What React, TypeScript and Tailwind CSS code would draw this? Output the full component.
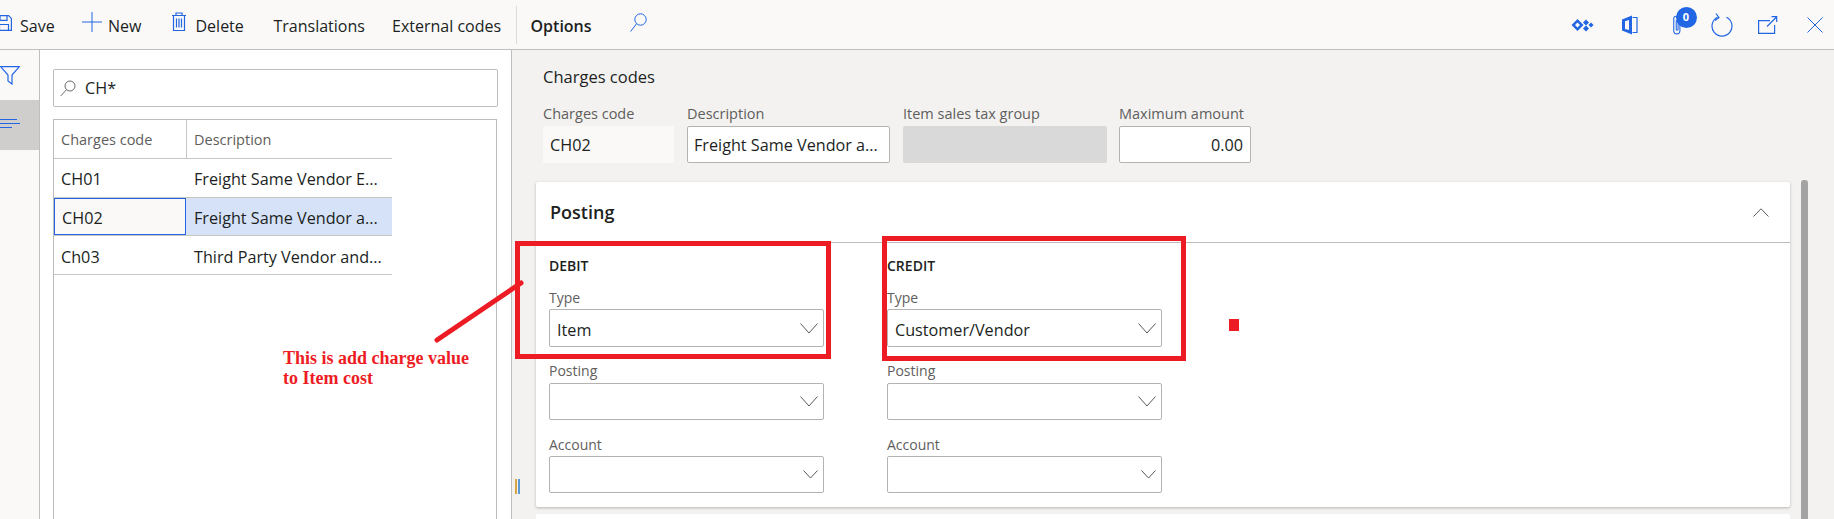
const BLUE = "#2266e3";

function Chevron({ small = false }: { small?: boolean }) {
  return small ? (
    <svg width="15" height="9" viewBox="0 0 15 9" fill="none" stroke="#5a5856" strokeWidth="1"><path d="M.5.5 7.5 8 14.5.5" /></svg>
  ) : (
    <svg width="18" height="11" viewBox="0 0 18 11" fill="none" stroke="#5a5856" strokeWidth="1"><path d="M.5.5 9 10 17.5.5" /></svg>
  );
}

function Select({ label, value = "", h, small = false, labelH, top }: { label: string; value?: string; h: string; small?: boolean; labelH: string; top: string }) {
  return (
    <div className={top}>
      <div className={`${labelH} text-[14px] leading-[16px] text-[#605e5c]`}>{label}</div>
      <div className={`${h} flex items-center justify-between rounded-[2px] border border-[#b4b3b2] bg-white pl-[7px] pr-[5px]`}>
        <span className="mt-[4px] text-[16.2px] text-[#201f1e]">{value}</span>
        <Chevron small={small} />
      </div>
    </div>
  );
}

function Column({ title, type }: { title: string; type: string }) {
  return (
    <div className="w-[275px]">
      <div className="h-[18px] text-[14px] leading-[18px] font-semibold text-[#201f1e]">{title}</div>
      <Select top="mt-[15px]" labelH="h-[19px]" label="Type" value={type} h="h-[38px]" />
      <Select top="mt-[16px]" labelH="h-[20px]" label="Posting" h="h-[37px]" />
      <Select top="mt-[17px]" labelH="h-[19px]" label="Account" h="h-[37px]" small />
    </div>
  );
}

function TopField({ label, w, cls, children }: { label: string; w: string; cls: string; children?: React.ReactNode }) {
  return (
    <div className={w}>
      <div className="h-[20px] text-[14.5px] leading-[16px] font-medium whitespace-nowrap text-[#605e5c]">{label}</div>
      <div className={`flex h-[37px] items-center rounded-[2px] pt-[2px] text-[16.2px] whitespace-nowrap text-[#201f1e] ${cls}`}>{children}</div>
    </div>
  );
}

function Row({ code, desc, selected = false, pad = "pt-[3px]" }: { code: string; desc: string; selected?: boolean; pad?: string }) {
  return (
    <div className="flex h-[38.5px] w-[338px] border-b border-[#c8c6c4] text-[16.2px] text-[#201f1e]">
      {selected ? (
        <div className={`flex w-[132px] items-center border border-[#2266e3] bg-[#faf9f8] pl-[7px] ${pad}`}>{code}</div>
      ) : (
        <div className={`flex w-[132px] items-center pl-[7px] ${pad}`}>{code}</div>
      )}
      <div className={`flex flex-1 items-center pl-[8px] whitespace-nowrap ${pad} ${selected ? "bg-[#d6e2f8]" : ""}`}>{desc}</div>
    </div>
  );
}

export default function App() {
  return (
    <div className="relative flex h-[519px] w-[1834px] flex-col overflow-hidden bg-white font-['Open_Sans',sans-serif]">
      {/* Toolbar */}
      <div className="flex h-[50px] shrink-0 items-center border-b border-[#bfbebd] bg-[#faf9f8] text-[16px] text-[#201f1e]">
        <svg className="ml-[-4px] mt-[-3px] shrink-0" width="16" height="16" viewBox="0 0 16 16" fill="none" stroke={BLUE} strokeWidth="1.2"><path d="M.6.6h12l2.8 2.8v12H.6z" /><path d="M4 .8v4.6h7V.8M3.5 15V9.5h9V15" /></svg>
        <span className="ml-[8px] mt-[2px] w-[35px]">Save</span>
        <svg className="ml-[27px] mt-[-5px] shrink-0" width="20" height="20" viewBox="0 0 20 20" fill="none" stroke={BLUE} strokeWidth="1"><path d="M10 0v20M0 10h20" /></svg>
        <span className="ml-[6px] mt-[2px] w-[35px]">New</span>
        <svg className="ml-[28px] mt-[-6px] shrink-0" width="16" height="19" viewBox="0 0 16 19" fill="none" stroke={BLUE} strokeWidth="1.2"><path d="M1 3.5h14M5 3.5V1h6v2.5M2.5 3.5v15h11v-15M5.5 6.5v9M8 6.5v9M10.5 6.5v9" /></svg>
        <span className="ml-[8.5px] mt-[2px] w-[50px]">Delete</span>
        <span className="ml-[28px] mt-[2px] w-[90px]">Translations</span>
        <span className="ml-[28.5px] mt-[2px] w-[110px] whitespace-nowrap">External codes</span>
        <div className="ml-[14px] h-[38px] w-px bg-[#dcdbda]" />
        <span className="ml-[13.5px] mt-[2px] w-[62px] font-semibold">Options</span>
        <svg className="ml-[37px] mt-[-5px] shrink-0" width="17" height="19" viewBox="0 0 17 19" fill="none" stroke={BLUE} strokeWidth="1"><circle cx="10.5" cy="6.5" r="5.7" /><path d="M6.5 10.8.6 18.5" /></svg>

        <div className="ml-auto mr-[11px] flex items-center">
          <svg width="24" height="14" viewBox="0 0 24 14" fill={BLUE}><path d="M6.5 1 12.5 7l-6 6L.5 7zM6.5 4.5 4 7l2.5 2.5L9 7z" fillRule="evenodd" /><path d="M15 1.5l3 3-3 3-3-3zM15 7.5l3 3-3 3-3-3zM20 4.5l2.6 2.5L20 9.5 17.5 7z" /></svg>
          <svg className="ml-[26px]" width="18" height="20" viewBox="0 0 18 20"><path d="M1 4.5 11 .5v19L1 15.5z" fill={BLUE} /><path d="M4 6.2 8 5v10L4 14z" fill="#faf9f8" /><path d="M11.5 2.5H16v15h-4.5" fill="none" stroke={BLUE} strokeWidth="1.2" /></svg>
          <div className="relative ml-[32px] h-[24px] w-[12px]">
            <svg className="absolute top-[2px] left-0" width="12" height="20" viewBox="0 0 12 24" fill="none" stroke={BLUE} strokeWidth="1.3"><path d="M9.5 5v14a3.7 3.7 0 0 1-7.4 0V4a2.6 2.6 0 0 1 5.2 0v13a1.1 1.1 0 0 1-2.2 0V6" /></svg>
            <div className="absolute top-[-6px] left-[4.5px] flex h-[21px] w-[21px] items-center justify-center rounded-full bg-[#2266e3] text-[11px] font-bold text-white">0</div>
          </div>
          <svg className="ml-[28px]" width="22" height="24" viewBox="0 0 22 24" fill="none" stroke={BLUE} strokeWidth="1.2"><path d="M15.5 4.2a10 10 0 1 1-9 0" /><path d="M5 .5 8 4.6 4 7.5" /></svg>
          <svg className="ml-[25px]" width="20" height="18" viewBox="0 0 20 18" fill="none" stroke={BLUE} strokeWidth="1.2"><path d="M12 4.6H.6v12.8h16V9" /><path d="M9 10.5 18.5 1M13.5.7h5.2v5.2" /></svg>
          <svg className="ml-[29px]" width="16" height="16" viewBox="0 0 16 16" fill="none" stroke={BLUE} strokeWidth="1"><path d="M.5.5l15 15M15.5.5l-15 15" /></svg>
        </div>
      </div>

      {/* Body */}
      <div className="flex min-h-0 flex-1">
        {/* Rail */}
        <div className="w-[40px] shrink-0 border-r border-[#bfbebd] bg-[#faf9f8]">
          <div className="flex h-[50px] items-start pt-[16px]">
            <svg className="ml-0" width="20" height="19" viewBox="0 0 20 19" fill="none" stroke={BLUE} strokeWidth="1.2"><path d="M.6.6h18.8L12 9v9l-4-3V9z" /></svg>
          </div>
          <div className="h-[50px] bg-[#cfcecd] pt-[19px]">
            <svg width="20" height="12" viewBox="0 0 20 12" fill="none" stroke={BLUE} strokeWidth="1"><path d="M0 .5h17M0 4.5h20M0 8.5h12" /></svg>
          </div>
        </div>

        {/* List pane */}
        <div className="flex w-[472px] shrink-0 flex-col border-r border-[#bfbebd] bg-white pt-[19px] pl-[13px]">
          <div className="flex h-[38px] w-[445px] items-center rounded-[2px] border border-[#bdbcbb] pl-[6px] text-[16.2px] text-[#201f1e]">
            <svg width="16" height="17" viewBox="0 0 16 17" fill="none" stroke="#6b6a68" strokeWidth="1"><circle cx="10" cy="6" r="5" /><path d="M6.5 9.7.7 16" /></svg>
            <span className="ml-[9px]">CH*</span>
          </div>
          <div className="mt-[12px] min-h-0 w-[444px] flex-1 border border-b-0 border-[#bdbcbb] bg-white">
            <div className="flex h-[39px] w-[338px] border-b border-[#c8c6c4] text-[14.5px] font-medium text-[#605e5c]">
              <div className="flex w-[133px] items-center border-r border-[#c8c6c4] pt-[2px] pl-[7px]">Charges code</div>
              <div className="flex items-center pt-[2px] pl-[7px]">Description</div>
            </div>
            <Row code="CH01" desc="Freight Same Vendor E..." />
            <Row code="CH02" desc="Freight Same Vendor a..." selected />
            <Row code="Ch03" desc="Third Party Vendor and..." pad="pt-[5px]" />
          </div>
        </div>

        {/* Detail pane */}
        <div className="flex min-w-0 flex-1 bg-[#f3f2f1]">
          <div className="w-[1278px] shrink-0 pl-[24px]">
            <div className="pl-[7px]">
              <div className="mt-[17px] h-[20px] text-[16.5px] leading-[20px] text-[#201f1e]">Charges codes</div>
              <div className="mt-[19px] flex">
                <TopField label="Charges code" w="w-[131px]" cls="bg-[#faf9f8] pl-[7px]">CH02</TopField>
                <TopField label="Description" w="ml-[13px] w-[203px]" cls="border border-[#b4b3b2] bg-white pl-[6px]">Freight Same Vendor a...</TopField>
                <TopField label="Item sales tax group" w="ml-[13px] w-[204px]" cls="bg-[#d9d9d9]" />
                <TopField label="Maximum amount" w="ml-[12px] w-[132px]" cls="justify-end border border-[#b4b3b2] bg-white pr-[7px]">0.00</TopField>
              </div>
            </div>
            <div className="mt-[19px] w-[1254px] rounded-[2px] bg-white shadow-[0_1px_3px_rgba(0,0,0,0.25)]">
              <div className="flex h-[61px] items-center justify-between border-b border-[#bdbcbb] pr-[21px] pl-[14px]">
                <span className="text-[18px] font-semibold text-[#201f1e]">Posting</span>
                <svg width="16" height="9" viewBox="0 0 16 9" fill="none" stroke="#605e5c" strokeWidth="1"><path d="M.5 8.5 8 .8l7.5 7.7" /></svg>
              </div>
              <div className="flex gap-[63px] pt-[14px] pb-[14px] pl-[13px]">
                <Column title="DEBIT" type="Item" />
                <Column title="CREDIT" type="Customer/Vendor" />
              </div>
            </div>
            <div className="mt-[7px] h-[20px] w-[1254px] rounded-t-[2px] bg-white" />
          </div>
          <div className="mt-[130px] ml-[11px] w-[7px] rounded-t-[3px] bg-[#a3a3a3]" />
        </div>
      </div>

      {/* Annotations drawn on top of the screenshot */}
      <div className="absolute top-[241px] left-[515px] h-[118px] w-[316px] border-[5px] border-[#ed1c24]" />
      <div className="absolute top-[236px] left-[882px] h-[125px] w-[304px] border-[5px] border-[#ed1c24]" />
      <div className="absolute top-[319px] left-[1229px] h-[12px] w-[10px] bg-[#ed1c24]" />
      <svg className="absolute top-[275px] left-[430px]" width="100" height="72" viewBox="0 0 100 72" fill="none" stroke="#ed1c24" strokeWidth="5" strokeLinecap="round"><path d="M7 65 91 8" /></svg>
      <div className="absolute top-[348px] left-[283px] font-['Liberation_Serif',serif] text-[18px] leading-[20px] font-bold whitespace-nowrap text-[#ed1c24]">
        This is add charge value
        <br />
        to Item cost
      </div>
      <div className="absolute top-[479px] left-[515px] flex h-[15px] gap-[1px]">
        <div className="w-[2px] bg-[#d9a441]" />
        <div className="w-[2px] bg-[#5b9bd5]" />
      </div>
    </div>
  );
}
